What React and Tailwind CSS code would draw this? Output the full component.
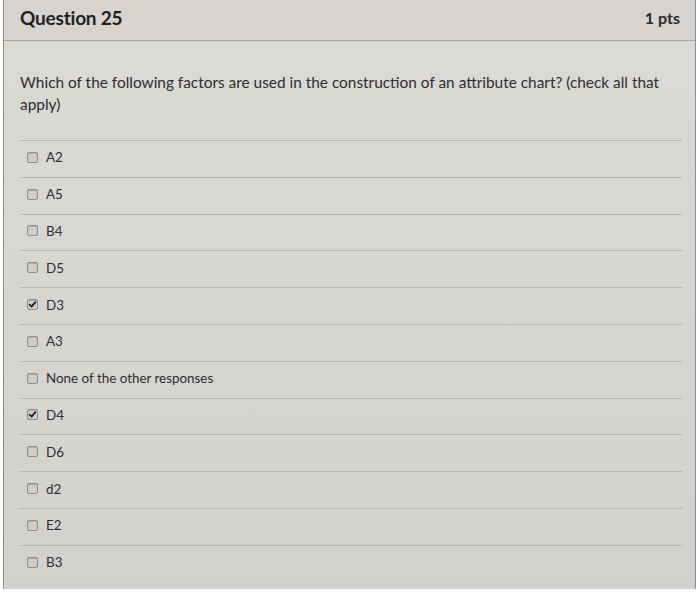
import React from 'react';

const options = [
  { label: 'A2', checked: false },
  { label: 'A5', checked: false },
  { label: 'B4', checked: false },
  { label: 'D5', checked: false },
  { label: 'D3', checked: true },
  { label: 'A3', checked: false },
  { label: 'None of the other responses', checked: false },
  { label: 'D4', checked: true },
  { label: 'D6', checked: false },
  { label: 'd2', checked: false },
  { label: 'E2', checked: false },
  { label: 'B3', checked: false },
];

const Checkbox = ({ checked }) => (
  <span className="w-[11px] h-[11px] rounded-[2px] border border-[#8e8c8a] bg-[#d0cecb] flex items-center justify-center shadow-[inset_0_1px_1px_rgba(0,0,0,0.15)]">
    {checked && (
      <svg viewBox="0 0 12 12" className="w-[9px] h-[9px]">
        <path d="M2.2 6.3 L4.8 8.8 L9.8 2.8" fill="none" stroke="#1e1e1e" strokeWidth="2.4" strokeLinecap="round" strokeLinejoin="round" />
      </svg>
    )}
  </span>
);

const App = () => {
  return (
    <div className="w-[700px] h-[593px] bg-white font-['Lato','Liberation_Sans',sans-serif] text-[#2b2b2b]">
      <div className="h-[589px] mx-[3px] mr-[4px] border-l border-r border-[#8f8d8a] bg-gradient-to-b from-[#dcdad7] to-[#d3d1ce] flex flex-col overflow-hidden">
        {/* Header */}
        <div className="h-[41px] flex items-center justify-between pl-[16px] pr-[15px] bg-[#d6d3d0] border-b border-[#a9a7a4]">
          <h2 className="text-[19px] font-bold tracking-[-0.2px] text-[#1f1f1f] pb-[4px]">Question 25</h2>
          <span className="text-[16px] font-bold text-[#2a2a2a] pb-[4px]">1 pts</span>
        </div>

        {/* Question */}
        <div className="pl-[16px] pr-[20px] pt-[30px]">
          <p className="text-[15.4px] leading-[22px] text-[#2e2e2e]">
            Which of the following factors are used in the construction of an attribute chart? (check all that apply)
          </p>
        </div>

        {/* Answers */}
        <div className="mt-[25px] ml-[16px] mr-[13px]">
          {options.map((opt) => (
            <div key={opt.label} className="h-[36.8px] border-t border-[#b8b6b3] flex items-center pl-[7px] pb-[3px] gap-[8px]">
              <Checkbox checked={opt.checked} />
              <span className="text-[13.4px] text-[#2e2e2e]">{opt.label}</span>
            </div>
          ))}
        </div>
      </div>
    </div>
  );
};

export default App;
